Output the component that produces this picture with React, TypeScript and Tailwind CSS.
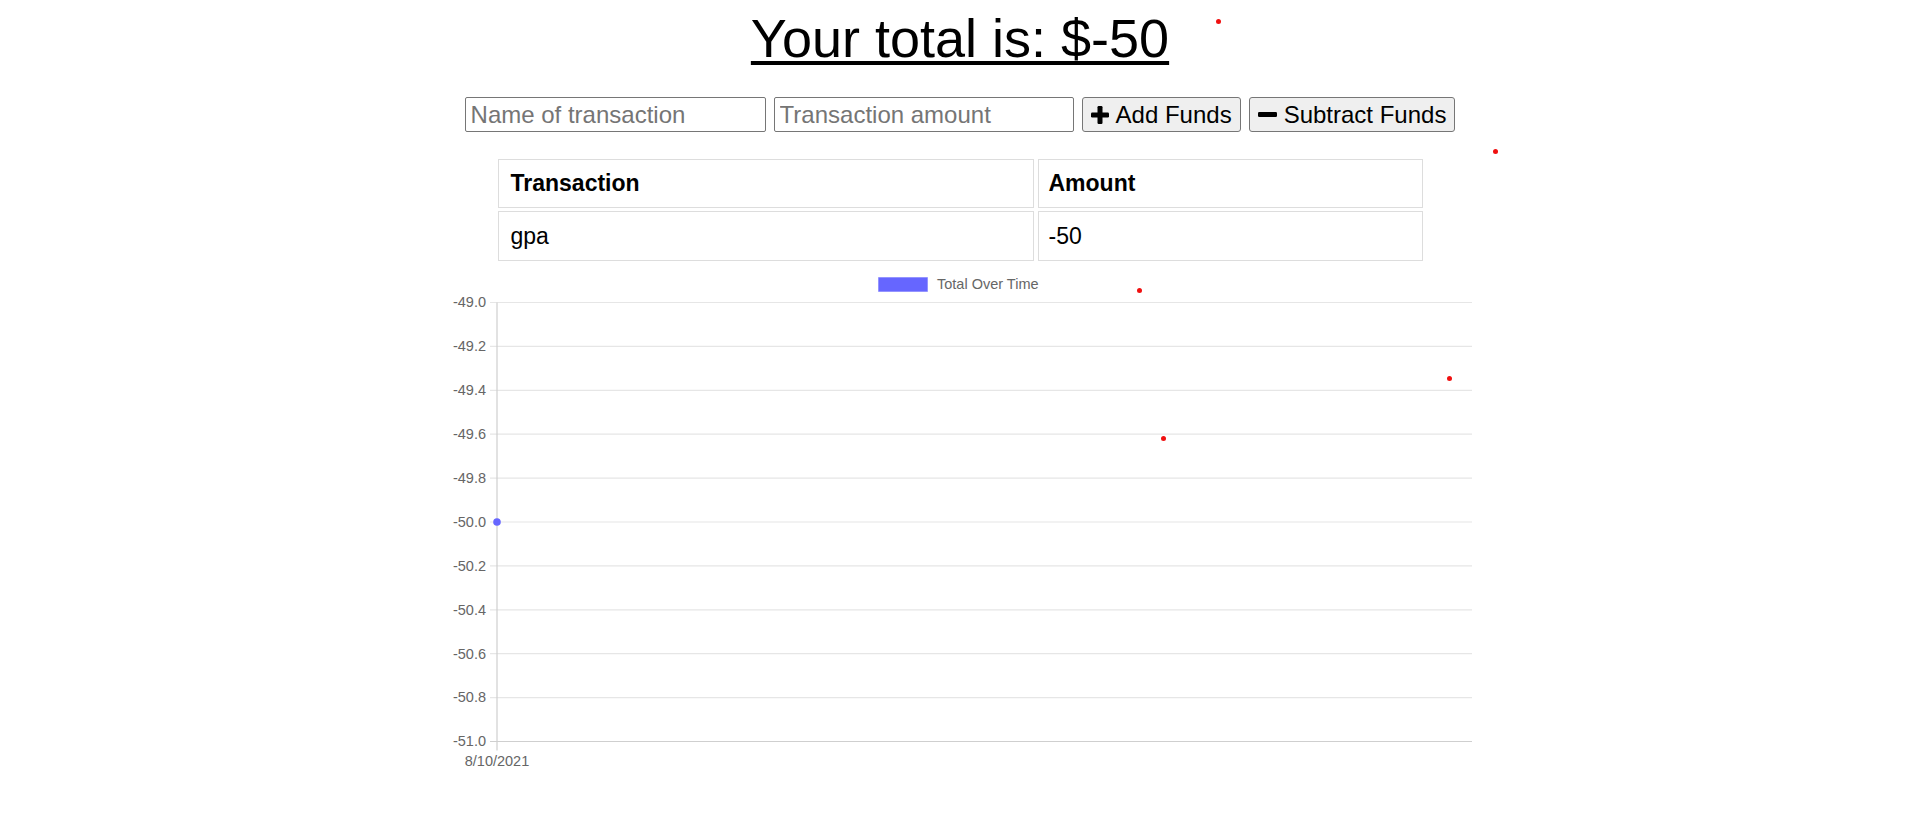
import { useState } from 'react';

const TICKS = ['-49.0', '-49.2', '-49.4', '-49.6', '-49.8', '-50.0', '-50.2', '-50.4', '-50.6', '-50.8', '-51.0'];

const DOTS = [
  { left: 1216, top: 19 },
  { left: 1493, top: 149 },
  { left: 1137, top: 288 },
  { left: 1447, top: 376 },
  { left: 1161, top: 436 },
];

function PlusIcon() {
  return (
    <svg width="18" height="18" viewBox="0 0 18 18" className="shrink-0">
      <rect x="6.5" y="0" width="5" height="18" rx="1.2" fill="#000" />
      <rect x="0" y="6.5" width="18" height="5" rx="1.2" fill="#000" />
    </svg>
  );
}

function MinusIcon() {
  return (
    <svg width="19" height="5" viewBox="0 0 19 5" className="shrink-0">
      <rect x="0" y="0" width="19" height="5" rx="1.2" fill="#000" />
    </svg>
  );
}

function Chart() {
  const top = 34.5;
  const step = 43.9;
  const axisX = 57;
  return (
    <svg width="1040" height="510" viewBox="0 0 1040 510" className="mt-[7px] block">
      {/* legend */}
      <rect x="438.5" y="9.5" width="49" height="14" fill="#6666ff" stroke="#6666ff" strokeOpacity="0.4" />
      <text x="497" y="17" fontSize="14.5" fill="#666" dominantBaseline="middle" fontFamily="'Liberation Sans', Arial, sans-serif">
        Total Over Time
      </text>
      {TICKS.map((t, i) => {
        const y = top + i * step;
        const last = i === TICKS.length - 1;
        return (
          <g key={t}>
            <line x1="50" x2="1032" y1={y} y2={y} stroke={last ? '#cfcfcf' : '#e6e6e6'} strokeWidth="1.2" />
            <text
              x="46"
              y={y + 1}
              fontSize="14.5"
              fill="#666"
              textAnchor="end"
              dominantBaseline="middle"
              fontFamily="'Liberation Sans', Arial, sans-serif"
            >
              {t}
            </text>
          </g>
        );
      })}
      <line x1={axisX} x2={axisX} y1={top} y2={top + 10 * step + 9} stroke="#cfcfcf" strokeWidth="1.2" />
      <circle cx={axisX} cy={top + 5 * step} r="3.8" fill="#6666ff" />
      <text
        x={axisX}
        y="494"
        fontSize="14.5"
        fill="#666"
        textAnchor="middle"
        dominantBaseline="middle"
        fontFamily="'Liberation Sans', Arial, sans-serif"
      >
        8/10/2021
      </text>
    </svg>
  );
}

export default function App() {
  const [name, setName] = useState('');
  const [amount, setAmount] = useState('');

  return (
    <div className="relative w-full h-[820px] bg-white flex flex-col items-center font-['Liberation_Sans',Arial,sans-serif] text-black">
      <h1 className="mt-[7px] text-[54px] leading-[62px] font-normal underline decoration-[4px] underline-offset-[4px]">
        Your total is: $-50
      </h1>

      <div className="mt-[28px] flex gap-[8px] h-[35px]">
        <input
          value={name}
          onChange={e => setName(e.target.value)}
          placeholder="Name of transaction"
          className="w-[301px] h-full border border-[#767676] rounded-[2px] px-[5px] text-[24px] placeholder:text-[#757575] outline-none"
        />
        <input
          value={amount}
          onChange={e => setAmount(e.target.value)}
          placeholder="Transaction amount"
          className="w-[300px] h-full border border-[#767676] rounded-[2px] px-[5px] text-[24px] placeholder:text-[#757575] outline-none"
        />
        <button className="h-full flex items-center gap-[7px] pl-[8px] pr-[8px] bg-[#efefef] border border-[#767676] rounded-[3px] text-[24px] leading-none">
          <PlusIcon />
          Add Funds
        </button>
        <button className="h-full flex items-center gap-[7px] pl-[8px] pr-[8px] bg-[#efefef] border border-[#767676] rounded-[3px] text-[24px] leading-none">
          <MinusIcon />
          Subtract Funds
        </button>
      </div>

      <div className="mt-[27px] grid grid-cols-[536px_385px] gap-x-[4px] gap-y-[3px] text-[23px]">
        <div className="h-[49px] flex items-center px-[12px] border border-[#dddddd] font-bold">Transaction</div>
        <div className="h-[49px] flex items-center px-[10px] border border-[#dddddd] font-bold">Amount</div>
        <div className="h-[50px] flex items-center px-[12px] border border-[#dddddd]">gpa</div>
        <div className="h-[50px] flex items-center px-[10px] border border-[#dddddd]">-50</div>
      </div>

      <Chart />

      {DOTS.map(d => (
        <span
          key={d.left}
          className="absolute w-[5px] h-[5px] rounded-full bg-[#f01010]"
          style={{ left: d.left, top: d.top }}
        />
      ))}
    </div>
  );
}
